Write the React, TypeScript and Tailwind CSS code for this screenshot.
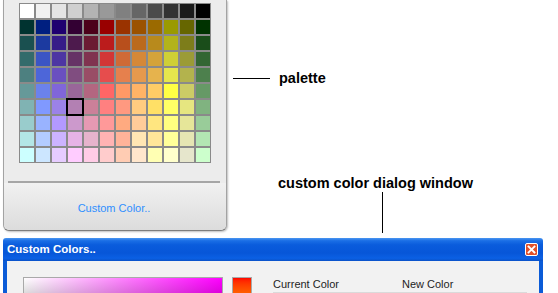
import React from "react";

const PALETTE: string[][] = [
  ["#ffffff", "#f1f1f1", "#e4e4e4", "#cfcfcf", "#b3b3b3", "#999999", "#808080", "#666666", "#4b4b4b", "#333333", "#1a1a1a", "#000000"],
  ["#003330", "#001f80", "#1f0070", "#330033", "#4c001a", "#990000", "#9a3300", "#9b5200", "#9b6a00", "#9a9a00", "#666600", "#003300"],
  ["#1a5050", "#1c3aa0", "#361c88", "#4d1a4d", "#6b1a33", "#bb1c1c", "#b84f1c", "#bb6a1c", "#b88a1c", "#b3b31a", "#7d7d1a", "#1a4d1a"],
  ["#336b6b", "#3b55c4", "#4d36a3", "#663366", "#803350", "#d23636", "#cf6a36", "#d58838", "#d4a33a", "#cfcf36", "#9b9b36", "#336633"],
  ["#4d8080", "#4d66d9", "#6a50c0", "#804d80", "#994d66", "#e64d4d", "#e6804d", "#e6994d", "#e6b34d", "#e6e64d", "#b3b34d", "#4d804d"],
  ["#669999", "#6b82ec", "#8066d9", "#996699", "#b36680", "#ff6666", "#ff9966", "#ffb366", "#ffcc66", "#ffff44", "#cccc66", "#669966"],
  ["#80b3b3", "#8099ff", "#9b82e8", "#b380b3", "#cc8099", "#ff8080", "#ff9980", "#ffcc80", "#ffe066", "#ffff66", "#e6e680", "#80b380"],
  ["#99cccc", "#99b3ff", "#b399ff", "#cc99cc", "#e699b3", "#ff9999", "#ffaa80", "#ffcc99", "#ffe680", "#ffff80", "#e6e699", "#99cc99"],
  ["#b3e6e6", "#b3ccff", "#ccb3ff", "#e6b3e6", "#e6b3cc", "#ffb3b3", "#ffb399", "#ffe6b3", "#ffe699", "#ffff99", "#e6e6b3", "#b3e6b3"],
  ["#ccffff", "#cce6ff", "#e6ccff", "#ffccff", "#ffcce6", "#ffcccc", "#ffccb3", "#ffe6cc", "#ffffb3", "#ffffcc", "#e6e6cc", "#ccffcc"],
];

const SELECTED = { row: 6, col: 3 };

function Palette() {
  return (
    <div className="grid grid-cols-[repeat(12,14px)] gap-[2px] p-px bg-[#8a8a8a] w-fit">
      {PALETTE.flatMap((row, r) =>
        row.map((c, i) => {
          const sel = r === SELECTED.row && i === SELECTED.col;
          return (
            <div
              key={`${r}-${i}`}
              className={sel ? "h-[14px] w-[14px] outline-2 outline-black" : "h-[14px] w-[14px]"}
              style={{ background: c }}
            />
          );
        })
      )}
    </div>
  );
}

function CloseButton() {
  return (
    <div className="flex h-[13px] w-[13px] items-center justify-center rounded-[2px] border border-white bg-[#e2502a]">
      <svg width="9" height="9" viewBox="0 0 9 9">
        <path d="M1.5 1.5 L7.5 7.5 M7.5 1.5 L1.5 7.5" stroke="#fff" strokeWidth="1.8" strokeLinecap="square" />
      </svg>
    </div>
  );
}

export default function App() {
  return (
    <div className="w-[558px] h-[293px] overflow-hidden bg-white font-['Liberation_Sans',Arial,sans-serif]">
      {/* Top: palette popup + callouts */}
      <div className="flex h-[238px]">
        <div className="ml-[3px] flex h-[231px] w-[224px] flex-col rounded-b-[6px] border-x border-b border-x-[#a3a3a3] border-b-[#7d7d7d] bg-[#ececec] shadow-[1px_1px_2px_rgba(0,0,0,0.25)]">
          <div className="ml-[15px] mt-[3px]">
            <Palette />
          </div>
          <div className="ml-[4px] mr-[6px] mt-[18px] h-[2px] bg-[#a6a6a6]" />
          <div className="flex flex-1 items-start justify-center rounded-b-[6px] bg-gradient-to-b from-[#f1f1f1] to-[#dcdcdc] pr-[2px] pt-[18px]">
            <span className="text-[11px] leading-[14px] text-[#2f8fff]">Custom Color..</span>
          </div>
        </div>

        <div className="flex flex-1 flex-col">
          <div className="mt-[70px] flex h-[17px] items-center">
            <div className="ml-[6px] h-px w-[37px] bg-black" />
            <span className="ml-[9px] text-[14.5px] font-bold leading-[17px] text-black">palette</span>
          </div>
          <div className="ml-[51px] mt-[88px] text-[14.5px] font-bold leading-[17px] text-black">
            custom color dialog window
          </div>
          <div className="ml-[155px] h-[41px] w-px bg-black" />
        </div>
      </div>

      {/* Custom colors dialog */}
      <div className="ml-[3px] w-[540px]">
        <div className="flex h-[23px] items-center justify-between rounded-t-[3px] bg-[linear-gradient(to_bottom,#4a96f0_0%,#1a6ee6_12%,#0a5cdc_30%,#0756d8_65%,#0b60e4_88%,#0a52c8_100%)] pl-[4px] pr-[5px]">
          <span className="text-[11.5px] font-bold leading-none text-white">Custom Colors..</span>
          <CloseButton />
        </div>
        <div className="flex h-[40px] border-x-4 border-x-[#0b5bd7] bg-[#f2f2f2] pl-[16px] pt-[16px]">
          <div className="h-[40px] w-[200px] border border-[#a9a9a9] bg-[linear-gradient(to_right,#ffffff,#ff00ff)]">
            <div className="h-full w-full bg-gradient-to-b from-transparent to-[rgba(0,0,0,0.35)]" />
          </div>
          <div className="ml-[9px] h-[40px] w-[20px] border border-[#a9a9a9] bg-gradient-to-b from-[#ff0000] to-[#ffa000]" />
          <div className="ml-[21px] flex w-[254px] flex-col">
            <div className="flex text-[11px] leading-[14px] text-[#1e1e1e]">
              <span className="w-[129px]">Current Color</span>
              <span>New Color</span>
            </div>
            <div className="mt-[1px] h-[20px] border-t border-[#dadada] bg-[#f6f6f6]" />
          </div>
        </div>
      </div>
    </div>
  );
}
